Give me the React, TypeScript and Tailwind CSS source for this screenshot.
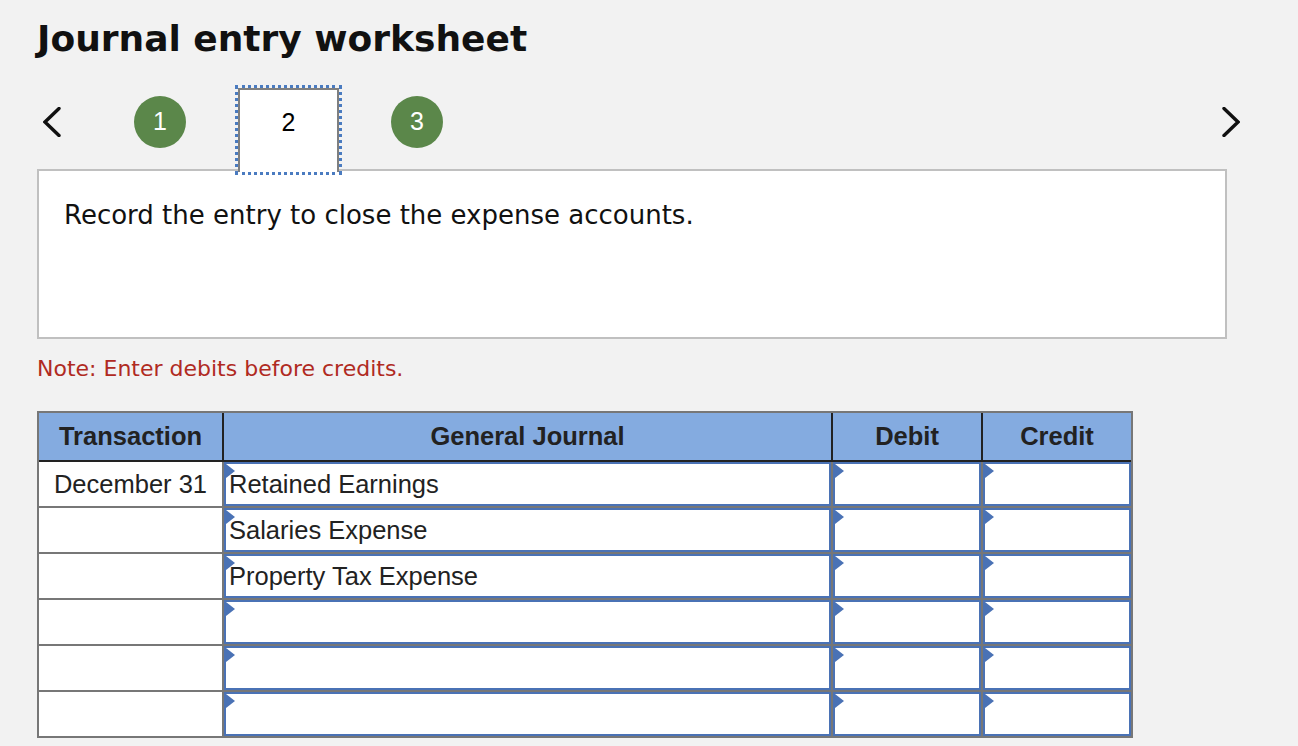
import React from "react";

const rows = [
  { date: "December 31", account: "Retained Earnings" },
  { date: "", account: "Salaries Expense" },
  { date: "", account: "Property Tax Expense" },
  { date: "", account: "" },
  { date: "", account: "" },
  { date: "", account: "" },
];

function Chevron({ dir }: { dir: "left" | "right" }) {
  return (
    <svg width="18" height="30" viewBox="0 0 18 30" className="shrink-0">
      <polyline
        points={dir === "left" ? "16,1.5 2,15 16,28.5" : "2,1.5 16,15 2,28.5"}
        fill="none"
        stroke="#111"
        strokeWidth="3.4"
        strokeLinecap="round"
        strokeLinejoin="miter"
      />
    </svg>
  );
}

function StepCircle({ n }: { n: number }) {
  return (
    <div className="w-[52px] h-[52px] rounded-full bg-[#5b874a] text-white flex items-center justify-center text-[25px] font-['Liberation_Sans',Arial,sans-serif] shrink-0">
      {n}
    </div>
  );
}

function InputCell({ value }: { value: string }) {
  return (
    <div className="relative bg-white border-2 border-[#4a72b5] flex items-center pl-[3px] text-[25.5px] text-[#222] whitespace-nowrap overflow-hidden">
      <span className="absolute left-0 top-0 w-0 h-0 border-y-[7px] border-y-transparent border-l-[9px] border-l-[#4a72b5]" />
      {value}
    </div>
  );
}

export default function App() {
  return (
    <main className="min-h-screen w-full bg-[#f2f2f2] pl-[37px] pt-[18px] pb-[9px] text-black font-['DejaVu_Sans',Verdana,sans-serif]">
      {/* Title */}
      <h1 className="text-[36px] leading-[42px] font-bold text-[#111]">Journal entry worksheet</h1>

      {/* Step navigation */}
      <div className="mt-[28px] h-[68px] flex items-center pl-[6px] w-[1203px]">
        <Chevron dir="left" />
        <div className="ml-[73px]">
          <StepCircle n={1} />
        </div>
        <div className="ml-[52px] self-start relative z-10 w-[101px] h-[84px] bg-white border-2 border-b-0 border-[#7f7f7f] outline-[3px] outline-dotted outline-[#4a7bc0] flex justify-center pt-[17px] text-[25px] leading-[30px] font-['Liberation_Sans',Arial,sans-serif]">
          2
        </div>
        <div className="ml-[52px]">
          <StepCircle n={3} />
        </div>
        <div className="flex-1" />
        <Chevron dir="right" />
      </div>

      {/* Instructions */}
      <div className="mt-[13px] w-[1190px] h-[170px] bg-white border-2 border-[#c0c0c0] pl-[25px] pt-[25px] text-[26px] text-[#111]">
        Record the entry to close the expense accounts.
      </div>

      <p className="mt-[13px] text-[22px] text-[#b02a22]">Note: Enter debits before credits.</p>

      {/* Journal table */}
      <div className="mt-[26px] w-[1096px] border-2 border-[#777] font-['Liberation_Sans',Arial,sans-serif] text-[#222]">
        <div className="flex gap-[2px] bg-[#222] pb-[2px]">
          {[
            ["Transaction", "w-[183px]"],
            ["General Journal", "w-[607px]"],
            ["Debit", "w-[148px]"],
            ["Credit", "w-[148px]"],
          ].map(([label, w]) => (
            <div key={label} className={`${w} h-[47px] bg-[#84abe0] flex items-center justify-center text-[25.5px] font-bold`}>
              {label}
            </div>
          ))}
        </div>
        <div className="grid grid-cols-[183px_607px_148px_148px] auto-rows-[44px] gap-[2px] bg-[#777]">
          {rows.map((r, i) => (
            <React.Fragment key={i}>
              <div className="bg-white flex items-center justify-center text-[25.5px] whitespace-nowrap">{r.date}</div>
              <InputCell value={r.account} />
              <InputCell value="" />
              <InputCell value="" />
            </React.Fragment>
          ))}
        </div>
      </div>
    </main>
  );
}
